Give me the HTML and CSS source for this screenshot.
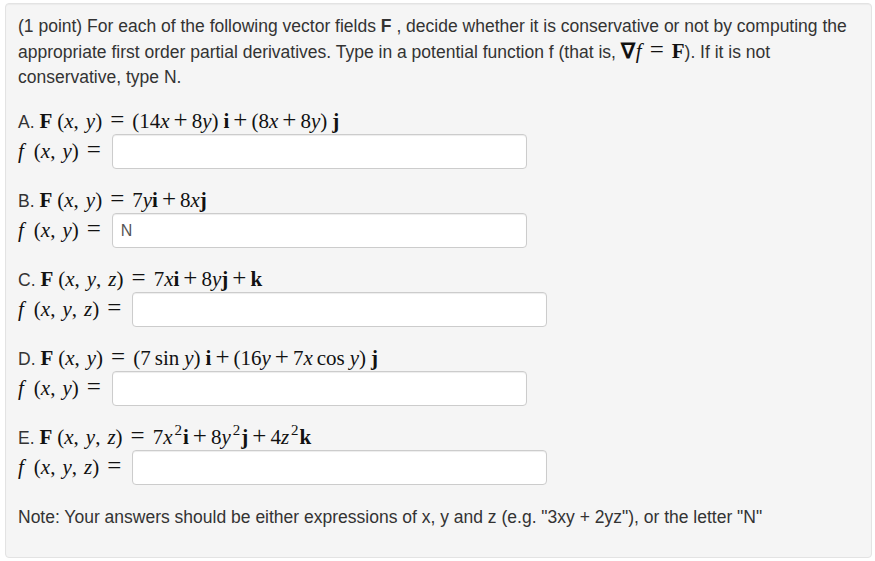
FILE: index.html
```html
<!DOCTYPE html>
<html>
<head>
<meta charset="utf-8">
<link rel="stylesheet" href="styles.css">
</head>
<body>
<div class="problem">
  <p class="intro">(1 point) For each of the following vector fields <b>F</b> , decide whether it is conservative or not by computing the appropriate first order partial derivatives. Type in a potential function f (that is, <span class="m"><span class="nabla">∇</span><i>f</i><span class="rel">=</span><b>F</b></span>). If it is not conservative, type N.</p>

  <div class="part">
    <div class="eq">A. <span class="m"><b>F</b><span class="sp"></span>(<i>x</i>,<span class="cm"></span><i>y</i>)<span class="rel">=</span>(14<i>x</i><span class="bin">+</span>8<i>y</i>)<span class="sp"></span><b>i</b><span class="bin">+</span>(8<i>x</i><span class="bin">+</span>8<i>y</i>)<span class="sp"></span><b>j</b></span></div>
    <div class="ans"><span class="m lbl"><i>f</i><span class="fs"></span>(<i>x</i>,<span class="cm"></span><i>y</i>)<span class="rel">=</span></span><input class="field" type="text" value=""></div>
  </div>

  <div class="part">
    <div class="eq">B. <span class="m"><b>F</b><span class="sp"></span>(<i>x</i>,<span class="cm"></span><i>y</i>)<span class="rel">=</span>7<i>y</i><b>i</b><span class="bin">+</span>8<i>x</i><b>j</b></span></div>
    <div class="ans"><span class="m lbl"><i>f</i><span class="fs"></span>(<i>x</i>,<span class="cm"></span><i>y</i>)<span class="rel">=</span></span><input class="field" type="text" value="N"></div>
  </div>

  <div class="part">
    <div class="eq">C. <span class="m"><b>F</b><span class="sp"></span>(<i>x</i>,<span class="cm"></span><i>y</i>,<span class="cm"></span><i>z</i>)<span class="rel">=</span>7<i>x</i><b>i</b><span class="bin">+</span>8<i>y</i><b>j</b><span class="bin">+</span><b>k</b></span></div>
    <div class="ans"><span class="m lbl"><i>f</i><span class="fs"></span>(<i>x</i>,<span class="cm"></span><i>y</i>,<span class="cm"></span><i>z</i>)<span class="rel">=</span></span><input class="field" type="text" value=""></div>
  </div>

  <div class="part">
    <div class="eq">D. <span class="m"><b>F</b><span class="sp"></span>(<i>x</i>,<span class="cm"></span><i>y</i>)<span class="rel">=</span>(7<span class="fn">sin</span><i>y</i>)<span class="sp"></span><b>i</b><span class="bin">+</span>(16<i>y</i><span class="bin">+</span>7<i>x</i><span class="fn">cos</span><i>y</i>)<span class="sp"></span><b>j</b></span></div>
    <div class="ans"><span class="m lbl"><i>f</i><span class="fs"></span>(<i>x</i>,<span class="cm"></span><i>y</i>)<span class="rel">=</span></span><input class="field" type="text" value=""></div>
  </div>

  <div class="part">
    <div class="eq">E. <span class="m"><b>F</b><span class="sp"></span>(<i>x</i>,<span class="cm"></span><i>y</i>,<span class="cm"></span><i>z</i>)<span class="rel">=</span>7<i>x</i><sup>2</sup><b>i</b><span class="bin">+</span>8<i>y</i><sup>2</sup><b>j</b><span class="bin">+</span>4<i>z</i><sup>2</sup><b>k</b></span></div>
    <div class="ans"><span class="m lbl"><i>f</i><span class="fs"></span>(<i>x</i>,<span class="cm"></span><i>y</i>,<span class="cm"></span><i>z</i>)<span class="rel">=</span></span><input class="field" type="text" value=""></div>
  </div>

  <p class="note">Note: Your answers should be either expressions of x, y and z (e.g. "3xy + 2yz"), or the letter "N"</p>
</div>
</body>
</html>
```

FILE: styles.css
```css
html, body {
  margin: 0;
  padding: 0;
  background: #ffffff;
}

body {
  font-family: "Liberation Sans", Arial, sans-serif;
  font-size: 17.5px;
  color: #333333;
}

.problem {
  margin: 3px 3px 3px 5px;
  padding: 10px 12px 27px 12px;
  background: #f5f5f5;
  border: 1px solid #e3e3e3;
  border-radius: 4px;
  height: 555px;
  box-sizing: border-box;
  box-shadow: inset 0 1px 1px rgba(0,0,0,0.04);
}

.intro {
  margin: 0;
  line-height: 25px;
}

.intro b {
  font-weight: bold;
}

.part {
  margin-top: 19px;
}

.eq {
  line-height: 25px;
  height: 25px;
  white-space: nowrap;
}

.ans {
  display: flex;
  align-items: center;
  height: 35px;
}

.m {
  font-family: "Liberation Serif", "Times New Roman", serif;
  font-size: 21px;
  color: #111111;
  white-space: nowrap;
  line-height: 25px;
}

.m i {
  font-style: italic;
}

.m b {
  font-weight: bold;
  font-style: normal;
}

.m sup {
  font-size: 15px;
  line-height: 0;
  vertical-align: 9px;
  margin: 0 1px 0 2px;
}

.m .sp {
  display: inline-block;
  width: 5px;
}

.m .fs {
  display: inline-block;
  width: 10px;
}

.m .cm {
  display: inline-block;
  width: 7px;
}

.m .rel {
  font-size: 25px;
  line-height: 20px;
  margin: 0 8px;
}

.m .bin {
  font-size: 25px;
  line-height: 20px;
  margin: 0 4px;
}

.m .fn {
  margin: 0 5px 0 4px;
}

.m .nabla {
  font-weight: bold;
  margin-right: 1px;
}

.lbl {
  margin-right: 3px;
}

.field {
  width: 415px;
  height: 35px;
  box-sizing: border-box;
  margin: 0;
  padding: 4px 8px;
  border: 1px solid #cccccc;
  border-radius: 4px;
  background: #ffffff;
  font-family: "Liberation Sans", Arial, sans-serif;
  font-size: 16px;
  color: #555555;
  box-shadow: inset 0 1px 1px rgba(0,0,0,0.075);
}

.note {
  margin: 20px 0 0 0;
  line-height: 25px;
}
```
